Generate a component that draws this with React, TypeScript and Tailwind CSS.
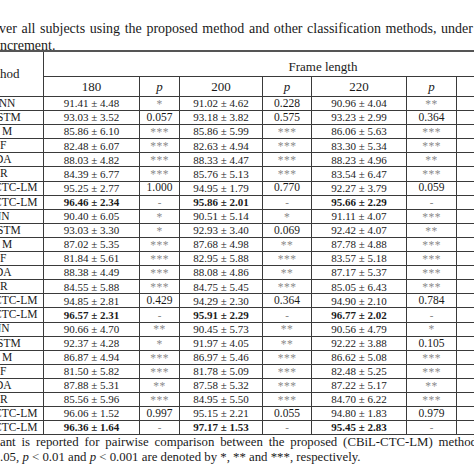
import React from "react";

type Row = {
  label: string;
  lc: string;
  v: [string, string, string, string, string, string];
  bold?: boolean;
};

const groups: Row[][] = [
  [
    { label: "CNN", lc: "ml-[-9px]", v: ["91.41 ± 4.48", "*", "91.02 ± 4.62", "0.228", "90.96 ± 4.04", "**"] },
    { label: "STM", lc: "ml-[-3px]", v: ["93.03 ± 3.52", "0.057", "93.18 ± 3.82", "0.575", "93.23 ± 2.99", "0.364"] },
    { label: "M", lc: "ml-[2px]", v: ["85.86 ± 6.10", "***", "85.86 ± 5.99", "***", "86.06 ± 5.63", "***"] },
    { label: "F", lc: "ml-[0px]", v: ["82.48 ± 6.07", "***", "82.63 ± 4.94", "***", "83.30 ± 5.34", "***"] },
    { label: "DA", lc: "ml-[-5px]", v: ["88.03 ± 4.82", "***", "88.33 ± 4.47", "***", "88.23 ± 4.96", "**"] },
    { label: "R", lc: "ml-[0px]", v: ["84.39 ± 6.77", "***", "85.76 ± 5.13", "***", "83.54 ± 6.47", "***"] },
    { label: "CTC-LM", lc: "ml-[-6px]", v: ["95.25 ± 2.77", "1.000", "94.95 ± 1.79", "0.770", "92.27 ± 3.79", "0.059"] },
    { label: "CTC-LM", lc: "ml-[-6px]", v: ["96.46 ± 2.34", "-", "95.86 ± 2.01", "-", "95.66 ± 2.29", "-"], bold: true },
  ],
  [
    { label: "NN", lc: "ml-[-7px]", v: ["90.40 ± 6.05", "*", "90.51 ± 5.14", "*", "91.11 ± 4.07", "***"] },
    { label: "STM", lc: "ml-[-3px]", v: ["93.03 ± 3.30", "*", "92.93 ± 3.40", "0.069", "92.42 ± 4.07", "**"] },
    { label: "M", lc: "ml-[2px]", v: ["87.02 ± 5.35", "***", "87.68 ± 4.98", "**", "87.78 ± 4.88", "***"] },
    { label: "F", lc: "ml-[0px]", v: ["81.84 ± 5.61", "***", "82.95 ± 5.88", "***", "83.57 ± 5.18", "***"] },
    { label: "DA", lc: "ml-[-5px]", v: ["88.38 ± 4.49", "***", "88.08 ± 4.86", "**", "87.17 ± 5.37", "***"] },
    { label: "R", lc: "ml-[0px]", v: ["84.55 ± 5.88", "***", "84.75 ± 5.45", "***", "85.05 ± 6.43", "***"] },
    { label: "CTC-LM", lc: "ml-[-6px]", v: ["94.85 ± 2.81", "0.429", "94.29 ± 2.30", "0.364", "94.90 ± 2.10", "0.784"] },
    { label: "CTC-LM", lc: "ml-[-6px]", v: ["96.57 ± 2.31", "-", "95.91 ± 2.29", "-", "96.77 ± 2.02", "-"], bold: true },
  ],
  [
    { label: "NN", lc: "ml-[-7px]", v: ["90.66 ± 4.70", "**", "90.45 ± 5.73", "**", "90.56 ± 4.79", "*"] },
    { label: "STM", lc: "ml-[-3px]", v: ["92.37 ± 4.28", "*", "91.97 ± 4.05", "**", "92.22 ± 3.88", "0.105"] },
    { label: "M", lc: "ml-[2px]", v: ["86.87 ± 4.94", "***", "86.97 ± 5.46", "***", "86.62 ± 5.08", "***"] },
    { label: "F", lc: "ml-[0px]", v: ["81.50 ± 5.82", "***", "81.78 ± 5.09", "***", "82.48 ± 5.25", "***"] },
    { label: "DA", lc: "ml-[-5px]", v: ["87.88 ± 5.31", "**", "87.58 ± 5.32", "***", "87.22 ± 5.17", "**"] },
    { label: "R", lc: "ml-[0px]", v: ["85.56 ± 5.96", "***", "84.95 ± 5.50", "***", "84.70 ± 6.22", "***"] },
    { label: "CTC-LM", lc: "ml-[-6px]", v: ["96.06 ± 1.52", "0.997", "95.15 ± 2.21", "0.055", "94.80 ± 1.83", "0.979"] },
    { label: "CTC-LM", lc: "ml-[-6px]", v: ["96.36 ± 1.64", "-", "97.17 ± 1.53", "-", "95.45 ± 2.83", "-"], bold: true },
  ],
];

const cell = "border-r border-b border-[#3a3a3a] flex items-center justify-center overflow-hidden whitespace-nowrap";

function PCell({ t }: { t: string }) {
  const isStar = t.includes("*");
  const isDash = t === "-";
  return (
    <div className={cell}>
      {isStar ? (
        <span className="text-[11.5px] text-[#8a8a8a] tracking-[0.5px] translate-y-[1px]">{t}</span>
      ) : isDash ? (
        <span className="text-[11px] text-[#777]">-</span>
      ) : (
        <span className="text-[11.5px]">{t}</span>
      )}
    </div>
  );
}

function VCell({ t, bold }: { t: string; bold?: boolean }) {
  return (
    <div className={cell}>
      <span className={bold ? "text-[11px] font-bold" : "text-[11px]"}>{t}</span>
    </div>
  );
}

export default function App() {
  const rows = groups.flat();
  return (
    <div className="w-[474px] h-[474px] overflow-hidden bg-white text-[#1a1a1a] font-['Liberation_Serif',serif]">
      <div className="h-[50px] pt-[20px] text-[14px] leading-[17px]">
        <div className="w-[481px] ml-[-8px] whitespace-nowrap text-justify [text-align-last:justify]">
          over all subjects using the proposed method and other classification methods, under
        </div>
        <div className="ml-[-4px] whitespace-nowrap">increment.</div>
      </div>
      <div className="w-[602px] border-t-2 border-[#555] grid grid-cols-[44px_96px_40px_83px_49px_95px_50px_95px_50px] grid-rows-[25px_20px_repeat(24,14.1px)]">
        <div className="row-span-2 border-r border-b border-[#3a3a3a] flex items-center overflow-hidden whitespace-nowrap text-[13px]">
          <span className="ml-[-21px]">Method</span>
        </div>
        <div className="col-span-8 border-b border-[#3a3a3a] flex items-center justify-center pt-[5px] text-[13px]">
          Frame length
        </div>
        <div className={cell + " text-[13px]"}>180</div>
        <div className={cell + " text-[13px] italic"}>p</div>
        <div className={cell + " text-[13px]"}>200</div>
        <div className={cell + " text-[13px] italic"}>p</div>
        <div className={cell + " text-[13px]"}>220</div>
        <div className={cell + " text-[13px] italic"}>p</div>
        <div className={cell}></div>
        <div className={cell}></div>
        {rows.map((r, i) => (
          <React.Fragment key={i}>
            <div className="border-r border-b border-[#3a3a3a] flex items-center overflow-hidden whitespace-nowrap text-[11.5px]">
              <span className={r.lc}>{r.label}</span>
            </div>
            <VCell t={r.v[0]} bold={r.bold} />
            <PCell t={r.v[1]} />
            <VCell t={r.v[2]} bold={r.bold} />
            <PCell t={r.v[3]} />
            <VCell t={r.v[4]} bold={r.bold} />
            <PCell t={r.v[5]} />
            <div className={cell}></div>
            <div className={cell}></div>
          </React.Fragment>
        ))}
      </div>
      <div className="text-[12.8px] leading-[15px]">
        <div className="w-[477px] whitespace-nowrap text-justify [text-align-last:justify]">
          ant is reported for pairwise comparison between the proposed (CBiL-CTC-LM) method
        </div>
        <div className="whitespace-nowrap">
          .05, <span className="italic">p</span> &lt; 0.01 and <span className="italic">p</span> &lt; 0.001 are denoted by *, ** and ***, respectively.
        </div>
      </div>
    </div>
  );
}
